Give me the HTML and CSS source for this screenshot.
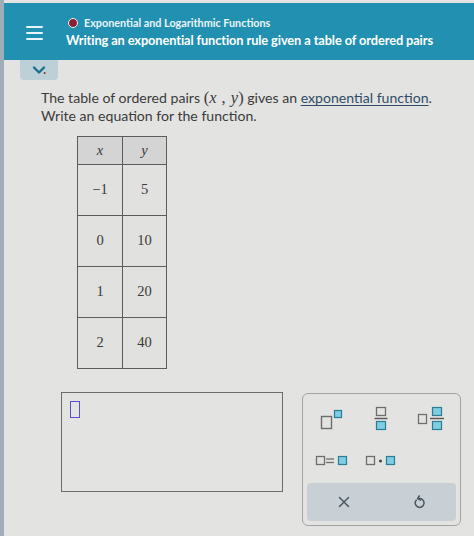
FILE: index.html
```html
<!DOCTYPE html>
<html lang="en">
<head>
<meta charset="utf-8">
<title>Writing an exponential function rule given a table of ordered pairs</title>
<link rel="stylesheet" href="styles.css">
</head>
<body>
<div class="screen">
  <div class="edge"></div>
  <div class="main">
    <header class="topbar">
      <div class="menu-btn" aria-label="Menu">
        <span></span><span></span><span></span>
      </div>
      <div class="titles">
        <div class="topic"><span class="topic-dot"></span>Exponential and Logarithmic Functions</div>
        <div class="lesson">Writing an exponential function rule given a table of ordered pairs</div>
      </div>
    </header>

    <div class="tab">
      <svg width="14" height="10" viewBox="0 0 14 10"><path d="M2 2.5 L7 7.5 L12 2.5" fill="none" stroke="#1c6f8c" stroke-width="2.4" stroke-linecap="round" stroke-linejoin="round"/><circle cx="12.6" cy="8" r="1" fill="#8a2b3a"/></svg>
    </div>

    <p class="prompt">
      The table of ordered pairs <span class="math">(<i>x</i> , <i>y</i>)</span> gives an <span class="term">exponential function</span>.<br>
      Write an equation for the function.
    </p>

    <table class="pairs">
      <tr class="head"><th><i>x</i></th><th><i>y</i></th></tr>
      <tr><td>&minus;1</td><td>5</td></tr>
      <tr><td>0</td><td>10</td></tr>
      <tr><td>1</td><td>20</td></tr>
      <tr><td>2</td><td>40</td></tr>
    </table>

    <div class="answer-row">
      <div class="answer-box"><span class="cursor"></span></div>

      <div class="keypad">
        <div class="keys">
          <button class="key" aria-label="Exponent">
            <svg width="24" height="22" viewBox="0 0 24 22"><rect x="1.5" y="8.5" width="10" height="12" fill="none" stroke="#6e6e6e" stroke-width="1.4"/><rect x="14.5" y="2.5" width="7" height="7" fill="#7fcde2" stroke="#2b7d96" stroke-width="1.2"/></svg>
          </button>
          <button class="key" aria-label="Fraction">
            <svg width="16" height="26" viewBox="0 0 16 26"><rect x="3.5" y="1.5" width="9" height="8" fill="none" stroke="#6e6e6e" stroke-width="1.3"/><line x1="1.5" y1="12.5" x2="14.5" y2="12.5" stroke="#555" stroke-width="1.4"/><rect x="3.5" y="15.5" width="9" height="8" fill="#7fcde2" stroke="#2b7d96" stroke-width="1.2"/></svg>
          </button>
          <button class="key" aria-label="Mixed number">
            <svg width="28" height="26" viewBox="0 0 28 26"><rect x="1.5" y="8.5" width="8" height="9" fill="none" stroke="#6e6e6e" stroke-width="1.3"/><rect x="15.5" y="1.5" width="9" height="8" fill="#7fcde2" stroke="#2b7d96" stroke-width="1.2"/><line x1="13" y1="12.5" x2="27" y2="12.5" stroke="#555" stroke-width="1.4"/><rect x="15.5" y="15.5" width="9" height="8" fill="#7fcde2" stroke="#2b7d96" stroke-width="1.2"/></svg>
          </button>
          <button class="key" aria-label="Equals">
            <svg width="34" height="12" viewBox="0 0 34 12"><rect x="1.5" y="1.5" width="8" height="8" fill="none" stroke="#6e6e6e" stroke-width="1.3"/><line x1="11" y1="4" x2="19" y2="4" stroke="#6e6e6e" stroke-width="1.3"/><line x1="11" y1="7.5" x2="19" y2="7.5" stroke="#6e6e6e" stroke-width="1.3"/><rect x="23.5" y="1.5" width="8" height="8" fill="#7fcde2" stroke="#2b7d96" stroke-width="1.2"/></svg>
          </button>
          <button class="key" aria-label="Multiply">
            <svg width="32" height="12" viewBox="0 0 32 12"><rect x="1.5" y="1.5" width="8" height="8" fill="none" stroke="#6e6e6e" stroke-width="1.3"/><circle cx="15.5" cy="6" r="1.5" fill="#444"/><rect x="21.5" y="1.5" width="8" height="8" fill="#7fcde2" stroke="#2b7d96" stroke-width="1.2"/></svg>
          </button>
        </div>
        <div class="actions">
          <button class="action" aria-label="Clear">
            <svg width="12" height="12" viewBox="0 0 12 12"><path d="M1.5 1.5 L10.5 10.5 M10.5 1.5 L1.5 10.5" stroke="#4a5560" stroke-width="1.5" stroke-linecap="round"/></svg>
          </button>
          <button class="action" aria-label="Undo">
            <svg width="12" height="14" viewBox="0 0 12 14"><path d="M3.2 5.2 A4.4 4.4 0 1 0 6 3.6" fill="none" stroke="#4a5560" stroke-width="1.5" stroke-linecap="round"/><path d="M6.2 1 L4.6 3.7 L7.4 5.2" fill="none" stroke="#4a5560" stroke-width="1.5" stroke-linecap="round" stroke-linejoin="round"/></svg>
          </button>
        </div>
      </div>
    </div>
  </div>
</div>
</body>
</html>
```

FILE: styles.css
```css
* {
  box-sizing: border-box;
}

html, body {
  margin: 0;
  padding: 0;
}

body {
  background: #e3e3e1;
  font-family: Lato, "Liberation Sans", sans-serif;
  color: #3a3a3a;
}

.screen {
  display: flex;
  min-height: 536px;
  width: 474px;
  overflow: hidden;
}

.edge {
  width: 4px;
  flex: none;
  background: #9eadb8;
}

.main {
  flex: 1;
  padding-top: 3px;
}

/* top bar */
.topbar {
  height: 57px;
  background: #2290b0;
  display: flex;
  align-items: center;
  color: #fff;
}

.menu-btn {
  margin-left: 22px;
  width: 17px;
  display: flex;
  flex-direction: column;
  gap: 4px;
  margin-top: 2px;
}

.menu-btn span {
  display: block;
  height: 2px;
  background: #e8f4f8;
  border-radius: 1px;
}

.titles {
  margin-left: 23px;
  display: flex;
  flex-direction: column;
  gap: 3px;
  margin-top: 1px;
}

.topic {
  display: flex;
  align-items: center;
  font-size: 10.8px;
  font-weight: 700;
  color: #eaf5f9;
  margin-left: 2px;
}

.topic-dot {
  width: 10px;
  height: 10px;
  border-radius: 50%;
  background: #8c1f34;
  border: 1.5px solid #f2f2f2;
  margin-right: 6px;
}

.lesson {
  font-size: 12.8px;
  font-weight: 700;
  letter-spacing: -0.1px;
}

/* collapse tab under the bar */
.tab {
  margin-left: 16px;
  width: 38px;
  height: 20px;
  background: #bdd0d8;
  border-radius: 0 0 4px 4px;
  display: flex;
  align-items: center;
  justify-content: center;
}

/* question */
.prompt {
  margin: 9px 0 0 37px;
  font-size: 14.1px;
  line-height: 17px;
  color: #3b3b3b;
}

.math {
  font-family: "Liberation Serif", serif;
  font-size: 16.5px;
  line-height: 1;
  word-spacing: 1px;
}

.term {
  color: #2f4d68;
  text-decoration: underline;
  text-decoration-thickness: 1px;
  text-underline-offset: 2px;
}

.pairs {
  margin: 12px 0 0 73px;
  border-collapse: collapse;
  font-family: "Liberation Serif", serif;
  font-size: 14.5px;
  color: #3a3a3a;
}

.pairs th,
.pairs td {
  border: 1px solid #5c5c5c;
  text-align: center;
  padding: 0;
  font-weight: 400;
}

.pairs th:first-child,
.pairs td:first-child {
  width: 45px;
}

.pairs th:last-child,
.pairs td:last-child {
  width: 44px;
}

.pairs .head th {
  height: 28px;
  background: #d3d4d3;
}

.pairs td {
  height: 51px;
  background: #e1e1df;
}

/* answer area */
.answer-row {
  display: flex;
  align-items: flex-start;
  margin: 23px 0 0 57px;
  gap: 19px;
}

.answer-box {
  width: 222px;
  height: 100px;
  border: 1.5px solid #6c6c6c;
  padding: 8px 0 0 8px;
}

.cursor {
  display: block;
  width: 10px;
  height: 17px;
  border: 1.5px solid #5a4fc8;
}

.keypad {
  width: 159px;
  height: 133px;
  margin-top: 1px;
  border: 1px solid #a3a3a3;
  border-radius: 6px;
  padding: 0 4px 4px;
  display: flex;
  flex-direction: column;
}

.keys {
  flex: 1;
  display: grid;
  grid-template-columns: repeat(3, 1fr);
  grid-template-rows: 46px 38px;
  padding-top: 2px;
}

.key {
  background: none;
  border: 0;
  padding: 0;
  display: flex;
  align-items: center;
  justify-content: center;
}

.actions {
  height: 38px;
  background: #c8d0d6;
  border-radius: 4px;
  display: grid;
  grid-template-columns: 1fr 1fr;
}

.action {
  background: none;
  border: 0;
  padding: 0;
  display: flex;
  align-items: center;
  justify-content: center;
}
```
